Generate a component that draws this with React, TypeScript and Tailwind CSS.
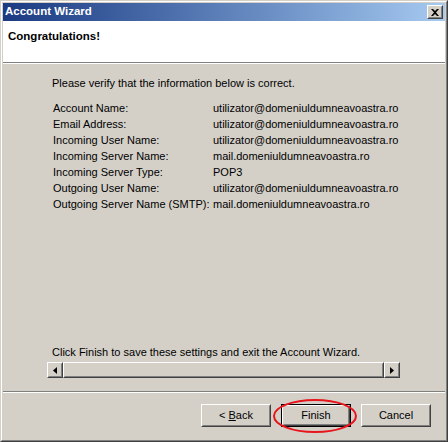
import React from "react";

const rows: [string, string][] = [
  ["Account Name:", "utilizator@domeniuldumneavoastra.ro"],
  ["Email Address:", "utilizator@domeniuldumneavoastra.ro"],
  ["Incoming User Name:", "utilizator@domeniuldumneavoastra.ro"],
  ["Incoming Server Name:", "mail.domeniuldumneavoastra.ro"],
  ["Incoming Server Type:", "POP3"],
  ["Outgoing User Name:", "utilizator@domeniuldumneavoastra.ro"],
  ["Outgoing Server Name (SMTP):", "mail.domeniuldumneavoastra.ro"],
];

// classic raised 3D box (two nested borders)
function Raised({ className = "", children }: { className?: string; children?: React.ReactNode }) {
  return (
    <div className={`border border-t-white border-l-white border-r-[#404040] border-b-[#404040] bg-[#d4d0c8] ${className}`}>
      <div className="w-full h-full border border-t-[#d4d0c8] border-l-[#d4d0c8] border-r-[#808080] border-b-[#808080] flex items-center justify-center">
        {children}
      </div>
    </div>
  );
}

function Button({ children, isDefault = false }: { children: React.ReactNode; isDefault?: boolean }) {
  if (isDefault) {
    return (
      <div className="w-[70px] h-[23px] border border-black">
        <Raised className="w-full h-full">{children}</Raised>
      </div>
    );
  }
  return <Raised className="w-[70px] h-[23px]">{children}</Raised>;
}

export default function App() {
  return (
    <div
      className="w-[448px] h-[442px] bg-[#d4d0c8] border border-t-[#d4d0c8] border-l-[#d4d0c8] border-r-[#404040] border-b-[#404040] text-[11px] text-black"
      style={{ fontFamily: '"Liberation Sans", Arial, sans-serif' }}
    >
      <div className="h-full border border-t-white border-l-white border-r-[#808080] border-b-[#808080] p-px flex flex-col">
        {/* title bar */}
        <div className="h-[18px] flex items-center justify-between pl-[2px] pr-[2px] bg-gradient-to-r from-[#1c3a82] to-[#a6caf0]">
          <span className="text-white font-bold text-[11.5px] leading-none">Account Wizard</span>
          <Raised className="w-[16px] h-[14px]">
            <svg width="8" height="7" viewBox="0 0 8 7" className="block">
              <path d="M0 0h2l2 2 2-2h2L5 3.5 8 7H6L4 5 2 7H0l3-3.5z" fill="#000" />
            </svg>
          </Raised>
        </div>

        {/* header */}
        <div className="h-[41px] bg-white pl-[5px] pt-[7px]">
          <span className="font-bold text-[11.5px] leading-[14px]">Congratulations!</span>
        </div>
        <div className="h-[2px] border-t border-t-[#808080] border-b border-b-white" />

        {/* body */}
        <div className="flex-1 flex flex-col pl-[44px] pt-[11px]">
          <div className="pl-[5px] leading-[16px]">Please verify that the information below is correct.</div>
          <div className="pl-[6px] mt-[9px] grid grid-cols-[160px_1fr] leading-[16px]">
            {rows.map(([k, v]) => (
              <React.Fragment key={k}>
                <span>{k}</span>
                <span>{v}</span>
              </React.Fragment>
            ))}
          </div>
          <div className="flex-1" />
          <div className="pl-[5px] leading-[16px]">Click Finish to save these settings and exit the Account Wizard.</div>
          <div className="mt-[2px] mb-[13px] w-[353px] h-[16px] flex">
            <Raised className="w-[16px] h-[16px]">
              <svg width="4" height="7" viewBox="0 0 4 7" className="block">
                <path d="M4 0v7L0 3.5z" fill="#000" />
              </svg>
            </Raised>
            <Raised className="flex-1 h-[16px]" />
            <Raised className="w-[16px] h-[16px]">
              <svg width="4" height="7" viewBox="0 0 4 7" className="block">
                <path d="M0 0v7l4-3.5z" fill="#000" />
              </svg>
            </Raised>
          </div>
        </div>
        <div className="h-[2px] border-t border-t-[#808080] border-b border-b-white" />

        {/* footer */}
        <div className="h-[46px] flex justify-end items-start pt-[11px] pr-[14px] gap-[10px] relative">
          <Button>
            <span>
              &lt; <span className="underline">B</span>ack
            </span>
          </Button>
          <Button isDefault>Finish</Button>
          <Button>Cancel</Button>
          <svg
            className="absolute left-[269px] top-[5px]"
            width="86"
            height="36"
            viewBox="0 0 86 36"
          >
            <ellipse cx="43" cy="18" rx="41" ry="16" fill="none" stroke="#e8141c" strokeWidth="2" />
          </svg>
        </div>
      </div>
    </div>
  );
}
